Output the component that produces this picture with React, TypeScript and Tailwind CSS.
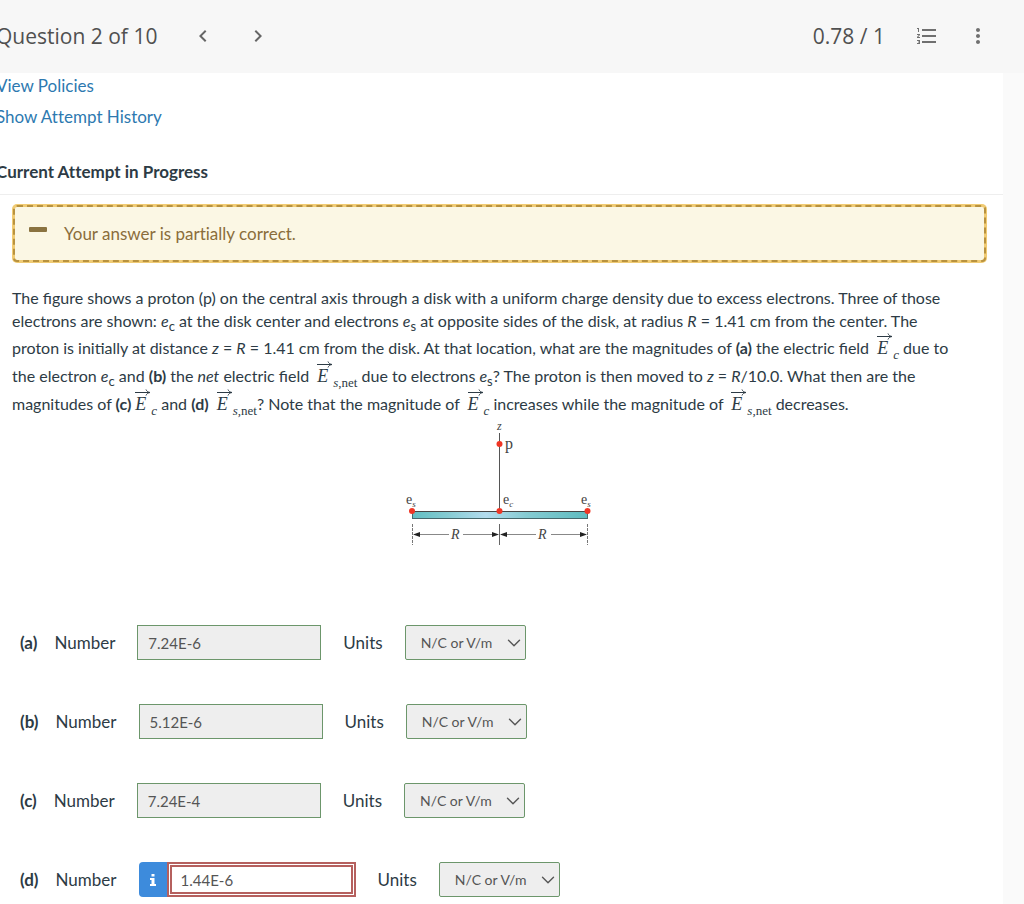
import { useState } from 'react'
import { LuChevronDown } from 'react-icons/lu'
import { MdChevronLeft, MdChevronRight, MdFormatListNumbered, MdMoreVert } from 'react-icons/md'

type Answer = { id: string; value: string; wrong?: boolean }

const answers: Answer[] = [
    { id: 'a', value: '7.24E-6' },
    { id: 'b', value: '5.12E-6' },
    { id: 'c', value: '7.24E-4' },
    { id: 'd', value: '1.44E-6', wrong: true },
]

// E with an arrow over it and a subscript
function Field({ net }: { net?: boolean }) {
    return (
        <span className="whitespace-nowrap font-['Liberation_Serif',serif]">
            <span className="inline-block pl-1">
                <svg viewBox="0 0 16 8" className="block h-2 w-4" fill="none" stroke="currentColor">
                    <path d="M0 4.500h14.500M11 1.500c.6 1.700 2 2.600 4 3c-2 .4-3.400 1.300-4 3" />
                </svg>
                <i className="block text-[18px] leading-4">E</i>
            </span>
            <span className="relative top-[5px] text-[13px] leading-3">
                {net ? <><i>s</i>,net</> : <i>c</i>}
            </span>
        </span>
    )
}

function Sub({ children }: { children: string }) {
    return <sub className="bottom-[-4px] text-[13px] leading-none">{children}</sub>
}

function DiskFigure() {
    return (
        <svg viewBox="0 0 190 130" className="mx-auto mt-1 block h-[130px] w-[190px] font-['Liberation_Serif',serif]" fill="#444">
            <defs>
                <linearGradient id="disk">
                    <stop offset="0" stopColor="#62bfc3" />
                    <stop offset=".2" stopColor="#85cbd2" />
                    <stop offset=".42" stopColor="#b3dcee" />
                    <stop offset=".65" stopColor="#85cbd2" />
                    <stop offset="1" stopColor="#5fbcc0" />
                </linearGradient>
            </defs>
            <text x="92" y="10" fontSize="12" fontStyle="italic">z</text>
            <path d="M94.500 13v79" stroke="#555" />
            <rect x="7.500" y="91.500" width="175" height="7" fill="url(#disk)" stroke="#46686c" />
            <path d="M7 91.500h176" stroke="#444" />
            <text x="100" y="29" fontSize="16">p</text>
            <text x="1" y="84" fontSize="14">e<tspan dy="3" fontSize="9" fontStyle="italic">s</tspan></text>
            <text x="98" y="84" fontSize="14">e<tspan dy="3" fontSize="9" fontStyle="italic">c</tspan></text>
            <text x="176" y="84" fontSize="14">e<tspan dy="3" fontSize="9" fontStyle="italic">s</tspan></text>
            <path d="M7.500 104v21M182.500 104v21" stroke="#777" strokeDasharray="3 1" />
            <path d="M94.500 104v21" stroke="#666" />
            <path d="M10 114.500h34M58 114.500h34M97 114.500h34M146 114.500h34" stroke="#888" />
            <path d="M8 114.500l7-2.500v5zM94 114.500l-7-2.500v5zM95 114.500l7-2.500v5zM182 114.500l-7-2.500v5z" fill="#222" />
            <text x="46" y="119" fontSize="14" fontStyle="italic">R</text>
            <text x="133" y="119" fontSize="14" fontStyle="italic">R</text>
            <g fill="#f03524">
                <circle cx="94.500" cy="24" r="3" />
                <circle cx="94.500" cy="91" r="3" />
                <circle cx="7" cy="91" r="3" />
                <circle cx="182.500" cy="91" r="3" />
            </g>
        </svg>
    )
}

function AnswerRow({ id, value, wrong }: Answer) {
    const [number, setNumber] = useState(value)

    return (
        <div className="flex h-[35px] items-center">
            <b className="mr-[17px]">({id})</b>
            <label htmlFor={`number-${id}`} className="mr-[22px]">Number</label>
            {wrong ? (
                <div className="flex">
                    <button
                        type="button"
                        aria-label="Answer information"
                        className="flex h-[35px] w-7 items-center justify-center rounded-l-sm bg-[#3d8bdc] text-white"
                    >
                        <svg viewBox="0 0 6 12" className="h-3 w-[6px]" fill="currentColor">
                            <path d="M1.500 0h3v2.500h-3zM0 4h4.500v6H6v2H0v-2h1.500V6H0z" />
                        </svg>
                    </button>
                    <input
                        id={`number-${id}`}
                        value={number}
                        onChange={(e) => setNumber(e.target.value)}
                        className="h-[35px] w-[189px] border-[5px] border-double border-[#b5605e] bg-white px-[9px] text-[15px] text-[#555] outline-none"
                    />
                </div>
            ) : (
                <input
                    id={`number-${id}`}
                    value={number}
                    disabled
                    className="h-[35px] w-[184px] border border-[#6c966b] bg-[#eee] px-[10px] text-[15px] text-[#555]"
                />
            )}
            <label htmlFor={`units-${id}`} className="mx-[22px]">Units</label>
            <div className="grid items-center">
                <select
                    id={`units-${id}`}
                    disabled
                    className="col-start-1 row-start-1 h-[35px] w-[121px] appearance-none rounded-xs border border-[#6c966b] bg-[#eee] pl-[15px] text-sm text-[#555] opacity-100"
                >
                    <option>N/C or V/m</option>
                </select>
                <LuChevronDown strokeWidth={1.5} className="pointer-events-none col-start-1 row-start-1 mr-px size-[22px] justify-self-end text-[#555]" />
            </div>
        </div>
    )
}

export default function App() {
    return (
        <div className="min-h-screen overflow-hidden bg-[#fafafa] font-['Lato',sans-serif] text-[17px] leading-[23px] text-[#2d3b45]">
            <header className="flex h-[73px] items-center bg-[#f7f7f7] pr-[34px] pb-px font-['Open_Sans',sans-serif] text-[#505050]">
                <h1 className="-ml-1 text-[21px]">Question 2 of 10</h1>
                <button type="button" aria-label="Previous question" className="ml-[34px] text-[#666]">
                    <MdChevronLeft className="size-6" />
                </button>
                <button type="button" aria-label="Next question" className="ml-[31px] text-[#666]">
                    <MdChevronRight className="size-6" />
                </button>
                <span className="ml-auto text-[21px]">0.78 / 1</span>
                <button type="button" aria-label="Question list" className="ml-[30px] text-[#707070]">
                    <MdFormatListNumbered className="size-6" />
                </button>
                <button type="button" aria-label="More options" className="ml-[27px] text-[#707070]">
                    <MdMoreVert className="size-6" />
                </button>
            </header>
            <main className="mr-[21px] bg-white pb-2">
                <div className="-ml-1 flex flex-col items-start gap-2 pt-px text-[#2d79b0] [font-variant-ligatures:none]">
                    <a href="#policies">View Policies</a>
                    <a href="#history">Show Attempt History</a>
                </div>
                <h2 className="border-b border-[#eee] pt-8 pb-[11px] font-bold [font-variant-ligatures:none]"><span className="-ml-1">Current Attempt in Progress</span></h2>
                <div className="pt-[9px] pr-4 pl-3">
                    <div className="rounded-[5px] bg-[#f0cb74] p-px">
                        <div role="alert" className="flex h-[57px] items-center rounded-sm border-2 border-dashed border-[#b8923f] bg-[#fbf7e4] bg-clip-padding pl-[14px] text-[#8a6d3b] [font-variant-ligatures:none]">
                            <span className="mr-[17px] mb-2 h-[5px] w-[18px] rounded-[1px] bg-[#8a7340]" />
                            Your answer is partially correct.
                        </div>
                    </div>
                    <p className="mt-[23px] text-base leading-[23px]">
                        The figure shows a proton (p) on the central axis through a disk with a uniform charge density due to
                        excess electrons. Three of those<br />
                        electrons are shown: <i>e</i><Sub>c</Sub> at the disk center and electrons <i>e</i><Sub>s</Sub> at
                        opposite sides of the disk, at radius <i>R</i> = 1.41 cm from the center. The<br />
                        proton is initially at distance <i>z</i> = <i>R</i> = 1.41 cm from the disk. At that location, what are
                        the magnitudes of <b>(a)</b> the electric field <Field /> due to<br />
                        the electron <i>e</i><Sub>c</Sub> and <b>(b)</b> the <i>net</i> electric field <Field net /> due to
                        electrons <i>e</i><Sub>s</Sub>? The proton is then moved to <i>z</i> = <i>R</i>/10.0. What then are the<br />
                        magnitudes of <b>(c)</b><Field /> and <b>(d)</b> <Field net />? Note that the magnitude
                        of <Field /> increases while the magnitude of <Field net /> decreases.
                    </p>
                    <DiskFigure />
                    <form className="mt-[75px] flex flex-col gap-11 pl-2">
                        {answers.map((answer) => (
                            <AnswerRow key={answer.id} {...answer} />
                        ))}
                    </form>
                </div>
            </main>
        </div>
    )
}
